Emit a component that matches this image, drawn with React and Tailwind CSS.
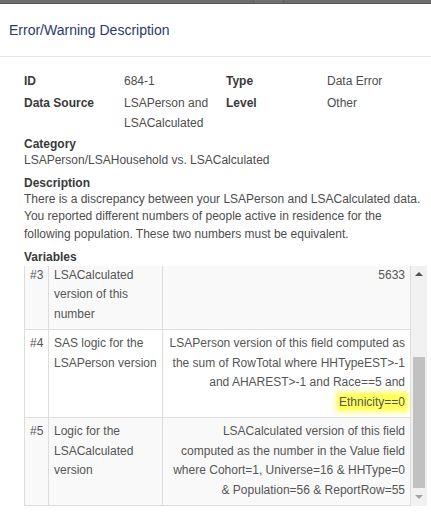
import React from "react";

const rows = [
  {
    n: "#3",
    name: "LSACalculated version of this number",
    value: "5633",
    striped: true,
    top: "pt-0",
  },
  {
    n: "#4",
    name: "SAS logic for the LSAPerson version",
    value: (
      <>
        LSAPerson version of this field computed as the sum of RowTotal where
        HHTypeEST&gt;-1 and AHAREST&gt;-1 and Race==5 and{" "}
        <span className="bg-[#ffff5c] shadow-[0_0_5px_3px_#ffff5c]">Ethnicity==0</span>
      </>
    ),
    striped: false,
    top: "pt-[4.5px]",
  },
  {
    n: "#5",
    name: "Logic for the LSACalculated version",
    value:
      "LSACalculated version of this field computed as the number in the Value field where Cohort=1, Universe=16 & HHType=0 & Population=56 & ReportRow=55",
    striped: true,
    top: "pt-[4.5px]",
  },
];

const Label = ({ children }) => (
  <div className="font-bold text-[#3a3a3a] leading-[16px]">{children}</div>
);

const App = () => {
  return (
    <div
      className="w-[431px] h-[514px] bg-white overflow-hidden text-[12px] text-[#4d4d4d]"
      style={{ fontFamily: '"Liberation Sans", Arial, sans-serif' }}
    >
      {/* page behind the modal */}
      <div className="h-[4px] flex bg-[#6d6d6d] border-b border-[#575757]">
        <div className="w-[253px]" />
        <div className="w-[31px] bg-[#727272] border-x border-[#5d5d5d]" />
      </div>

      <div className="h-[53px] flex items-center pl-[9px] border-b border-[#e5e5e5]">
        <h4 className="text-[14px] leading-[20px] text-[#2b3a6b]">
          Error/Warning Description
        </h4>
      </div>

      <div className="pl-[24px] pr-[4px] pt-[13.6px]">
        <div className="grid grid-cols-[100px_102px_101px_1fr] gap-y-[2px] leading-[20px]">
          <div className="font-bold text-[#3a3a3a]">ID</div>
          <div>684-1</div>
          <div className="font-bold text-[#3a3a3a]">Type</div>
          <div>Data Error</div>
          <div className="font-bold text-[#3a3a3a]">Data Source</div>
          <div>LSAPerson and LSACalculated</div>
          <div className="font-bold text-[#3a3a3a]">Level</div>
          <div>Other</div>
        </div>

        <div className="mt-[3.4px]">
          <Label>Category</Label>
          <div className="leading-[17.5px]">LSAPerson/LSAHousehold vs. LSACalculated</div>
        </div>

        <div className="mt-[5.5px]">
          <Label>Description</Label>
          <p className="leading-[17.5px]">
            There is a discrepancy between your LSAPerson and LSACalculated data.
            You reported different numbers of people active in residence for the
            following population. These two numbers must be equivalent.
          </p>
        </div>

        <div className="mt-[5.5px]">
          <Label>Variables</Label>
        </div>

        <div className="mt-[1px] h-[240px] flex overflow-hidden">
          <div className="w-[387px] border-l border-[#ddd] leading-[19.5px] text-[#555]">
            {rows.map((r) => (
              <div
                key={r.n}
                className={`grid grid-cols-[24px_114px_248px] ${r.striped ? "bg-[#f9f9f9]" : "bg-white"}`}
              >
                <div className={`${r.top} pb-[4.5px] pl-[5px] border-r border-b border-[#ddd]`}>
                  {r.n}
                </div>
                <div className={`${r.top} pb-[4.5px] pl-[5px] pr-[3px] border-r border-b border-[#ddd]`}>
                  {r.name}
                </div>
                <div className={`${r.top} pb-[4.5px] px-[5px] text-right border-r border-b border-[#ddd]`}>
                  {r.value}
                </div>
              </div>
            ))}
          </div>

          {/* scrollbar */}
          <div className="w-[17px] h-[240px] bg-[#f1f1f1] flex flex-col">
            <div className="h-[17px] flex items-center justify-center">
              <div className="w-0 h-0 border-x-[4px] border-x-transparent border-b-[4px] border-b-[#505050]" />
            </div>
            <div className="h-[74px]" />
            <div className="h-[131px] mx-[2px] bg-[#c1c1c1]" />
            <div className="flex-1" />
            <div className="h-[17px] flex items-center justify-center">
              <div className="w-0 h-0 border-x-[4px] border-x-transparent border-t-[4px] border-t-[#a3a3a3]" />
            </div>
          </div>
        </div>
      </div>
    </div>
  );
};

export default App;
